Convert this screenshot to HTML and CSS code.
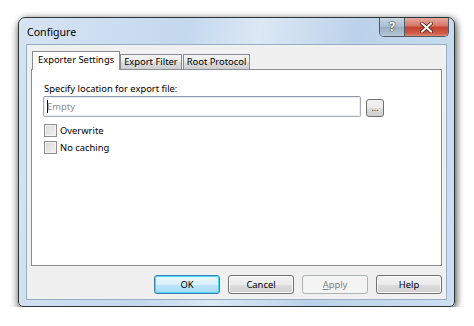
FILE: index.html
```html
<!DOCTYPE html>
<html lang="en">
<head>
    <meta charset="UTF-8">
    <title>Configure</title>
    <link rel="stylesheet" href="styles.css">
</head>
<body>

<div class="desk">
    <div class="window">
        <div class="titlebar">
            <span class="title">Configure</span>
            <div class="caption-btns">
                <span class="cap-help">?</span>
                <span class="cap-close">
                    <svg width="13" height="11" viewBox="0 0 13 11">
                        <path d="M2 1.5 L11 9.5 M11 1.5 L2 9.5" stroke="#4a1a14" stroke-width="3.6" stroke-linecap="square"/>
                        <path d="M2 1.5 L11 9.5 M11 1.5 L2 9.5" stroke="#fff" stroke-width="2" stroke-linecap="square"/>
                    </svg>
                </span>
            </div>
        </div>

        <div class="client">
            <div class="tabs">
                <span class="tab active">Exporter Settings</span>
                <span class="tab">Export Filter</span>
                <span class="tab">Root Protocol</span>
            </div>
            <div class="panel">
                <div class="label">Specify location for export file:</div>
                <div class="path-row">
                    <div class="path-input"><span class="caret"></span>Empty</div>
                    <button class="browse">...</button>
                </div>
                <label class="check"><span class="box"></span>Overwrite</label>
                <label class="check"><span class="box"></span>No caching</label>
            </div>
            <div class="actions">
                <button class="btn default">OK</button>
                <button class="btn">Cancel</button>
                <button class="btn disabled"><u>A</u>pply</button>
                <button class="btn">Help</button>
            </div>
        </div>
    </div>
</div>

</body>
</html>
```

FILE: styles.css
```css
body {
    margin: 0;
    background: #fff;
    font-family: "Noto Sans", "Open Sans", sans-serif;
    font-size: 9.4px;
    color: #000;
}
.desk {
    padding: 17px 0 0 18px;
}
.window {
    box-sizing: border-box;
    width: 437px;
    height: 290px;
    border: 1px solid #2f3437;
    border-radius: 7px 7px 5px 5px;
    background: linear-gradient(100deg, #d5e4f3 0%, #c4d8ee 35%, #dbe8f5 50%, #bcd2ea 70%, #cddff1 100%);
    box-shadow: 0 5px 9px rgba(0, 0, 0, 0.55), 2px 0 6px rgba(0, 0, 0, 0.35);
    padding: 0 7px 6px 7px;
    display: flex;
    flex-direction: column;
}
.titlebar {
    height: 26px;
    display: flex;
    align-items: flex-start;
}
.title {
    font-size: 10.6px;
    margin-top: 7px;
    margin-left: 1px;
}
.caption-btns {
    margin-left: auto;
    margin-right: -2px;
    display: flex;
    height: 18px;
    border: 1px solid #535a63;
    border-top: none;
    border-radius: 0 0 5px 5px;
    overflow: hidden;
}
.cap-help {
    width: 24px;
    background: linear-gradient(#c8d6e4, #a9bccf 50%, #98adc2 51%, #b6c8d9);
    border-right: 1px solid #535a63;
    color: #fff;
    font-weight: bold;
    font-size: 12px;
    text-align: center;
    line-height: 17px;
    text-shadow: 0 0 2px #333, 0 0 1px #333;
}
.cap-close {
    width: 43px;
    background: linear-gradient(#e8a89d, #d47466 45%, #c2432f 50%, #d05a48 85%, #e08a78);
    display: flex;
    align-items: center;
    justify-content: center;
}
.client {
    flex: 1;
    background: #f0f0f0;
    border: 1px solid #98aec6;
    padding: 7px 4px 0 4px;
    display: flex;
    flex-direction: column;
}
.tabs {
    display: flex;
    align-items: flex-end;
    height: 17px;
    padding-left: 1px;
    position: relative;
    z-index: 1;
}
.tab {
    height: 14px;
    line-height: 14px;
    padding: 0 3px;
    border: 1px solid #898c95;
    border-bottom: none;
    margin-right: 1px;
    background: linear-gradient(#f3f3f3, #ebebeb 50%, #dcdcdc 51%, #cfcfcf);
}
.tab.active {
    height: 18px;
    line-height: 16px;
    padding: 0 5px;
    margin-right: 0;
    margin-bottom: -1px;
    background: #fff;
}
.panel {
    height: 197px;
    box-sizing: border-box;
    background: #fff;
    border: 1px solid #898c95;
    padding: 11px 12px 0 12px;
}
.label {
    height: 15px;
    line-height: 15px;
}
.path-row {
    display: flex;
    align-items: flex-end;
    margin-left: -1px;
}
.path-input {
    box-sizing: border-box;
    width: 318px;
    height: 21px;
    border: 1px solid #abadb3;
    border-top-color: #8e9aa8;
    border-radius: 2px;
    box-shadow: inset 0 0 0 1px #e6eef7;
    color: #8a8a8a;
    line-height: 19px;
    padding-left: 3px;
    display: flex;
    align-items: center;
}
.caret {
    width: 1px;
    height: 13px;
    background: #000;
    margin-right: -1px;
}
.browse {
    box-sizing: border-box;
    width: 18px;
    height: 18px;
    margin-left: 5px;
    padding: 0;
    border: 1px solid #707070;
    border-radius: 3px;
    background: linear-gradient(#f2f2f2, #ebebeb 50%, #dddddd 51%, #cfcfcf);
    font-family: inherit;
    font-size: 9px;
    line-height: 12px;
    color: #333;
}
.check {
    display: flex;
    align-items: center;
    height: 17px;
    margin-top: 5px;
}
.check + .check {
    margin-top: 0;
}
.box {
    box-sizing: border-box;
    width: 13px;
    height: 13px;
    border: 1px solid #8f8f8f;
    background: linear-gradient(135deg, #d8d8d8, #f4f4f4);
    box-shadow: inset 0 0 0 1px #f2f2f2;
    margin-right: 3px;
}
.actions {
    display: flex;
    justify-content: flex-end;
    gap: 8px;
    margin-top: 9px;
    padding-right: 0;
}
.btn {
    box-sizing: border-box;
    width: 66px;
    height: 19px;
    padding: 0;
    border: 1px solid #707070;
    border-radius: 3px;
    background: linear-gradient(#f2f2f2, #ebebeb 50%, #dddddd 51%, #cfcfcf);
    box-shadow: inset 0 0 0 1px #fcfcfc;
    font-family: inherit;
    font-size: 9.4px;
    color: #000;
}
.btn.default {
    border-color: #3c7fb1;
    background: linear-gradient(#eaf6fd, #d9f0fc 50%, #bee6fd 51%, #a7d9f5);
    box-shadow: inset 0 0 0 1px #48d8fb;
}
.btn.disabled {
    border-color: #adb2b5;
    background: #f4f4f4;
    box-shadow: none;
    color: #838383;
}
```
